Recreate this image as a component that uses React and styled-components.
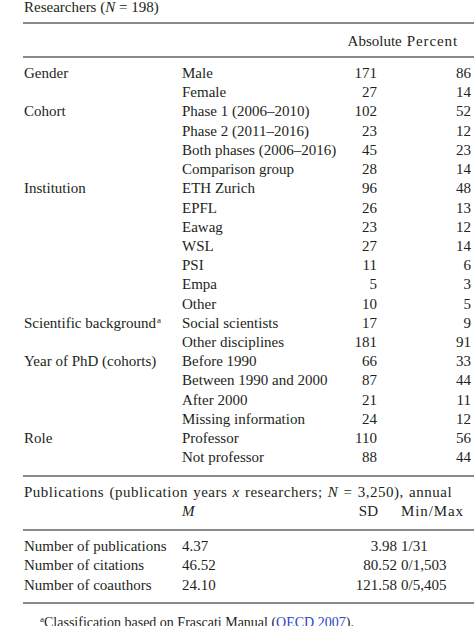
import React from "react";
import styled, { createGlobalStyle } from "styled-components";

const GlobalStyle = createGlobalStyle`
  html, body {
    margin: 0;
    padding: 0;
    background: #ffffff;
    overflow: hidden;
  }
  body {
    font-family: "Liberation Serif", "Times New Roman", serif;
    color: #231f20;
  }
`;

const groups = [
  {
    label: "Gender",
    items: [
      ["Male", 171, 86],
      ["Female", 27, 14],
    ],
  },
  {
    label: "Cohort",
    items: [
      ["Phase 1 (2006–2010)", 102, 52],
      ["Phase 2 (2011–2016)", 23, 12],
      ["Both phases (2006–2016)", 45, 23],
      ["Comparison group", 28, 14],
    ],
  },
  {
    label: "Institution",
    items: [
      ["ETH Zurich", 96, 48],
      ["EPFL", 26, 13],
      ["Eawag", 23, 12],
      ["WSL", 27, 14],
      ["PSI", 11, 6],
      ["Empa", 5, 3],
      ["Other", 10, 5],
    ],
  },
  {
    label: "Scientific background",
    note: "a",
    items: [
      ["Social scientists", 17, 9],
      ["Other disciplines", 181, 91],
    ],
  },
  {
    label: "Year of PhD (cohorts)",
    items: [
      ["Before 1990", 66, 33],
      ["Between 1990 and 2000", 87, 44],
      ["After 2000", 21, 11],
      ["Missing information", 24, 12],
    ],
  },
  {
    label: "Role",
    items: [
      ["Professor", 110, 56],
      ["Not professor", 88, 44],
    ],
  },
];

const publications = [
  ["Number of publications", "4.37", "3.98", "1/31"],
  ["Number of citations", "46.52", "80.52", "0/1,503"],
  ["Number of coauthors", "24.10", "121.58", "0/5,405"],
];

function App() {
  return (
    <>
      <GlobalStyle />
      <Table>
        <Caption>
          Researchers (<i>N</i> = 198)
        </Caption>
        <Rule $top="7.4px" />
        <HeaderRow>
          <span>Absolute</span>
          <Wide>Percent</Wide>
        </HeaderRow>
        <Rule />
        <Body>
          {groups.map(({ label, note, items }) =>
            items.map(([name, abs, pct], i) => (
              <React.Fragment key={label + name}>
                <Cell>
                  {i === 0 ? label : ""}
                  {i === 0 && note ? <Sup>{note}</Sup> : null}
                </Cell>
                <Cell>{name}</Cell>
                <Num>{abs}</Num>
                <Num>{pct}</Num>
              </React.Fragment>
            ))
          )}
        </Body>
        <Rule />
        <PubHead>
          <Title>
            Publications (publication years <i>x</i> researchers; <i>N</i> =
            3,250), annual
          </Title>
          <Cell />
          <Cell>
            <i>M</i>
          </Cell>
          <Num $pad="19px">SD</Num>
          <Cell $pad="4px">
            <Wide>Min/Max</Wide>
          </Cell>
        </PubHead>
        <Rule />
        <PubBody>
          {publications.map(([name, m, sd, range]) => (
            <React.Fragment key={name}>
              <Cell>{name}</Cell>
              <Cell>{m}</Cell>
              <Num>{sd}</Num>
              <Cell $pad="4px">{range}</Cell>
            </React.Fragment>
          ))}
        </PubBody>
        <Rule />
        <Footnote>
          <Sup>a</Sup>Classification based on Frascati Manual (
          <Link href="#!">OECD 2007</Link>).
        </Footnote>
      </Table>
    </>
  );
}

const Table = styled.div`
  margin: 0 0 0 23px;
  width: 460px;
  font-size: 15px;
  line-height: 19.2px;
`;

const Caption = styled.div`
  padding-left: 1px;
  line-height: 14.6px;
`;

const Rule = styled.div`
  height: 2px;
  margin-top: ${(p) => p.$top || "0"};
  background: #8a8a8a;
`;

const HeaderRow = styled.div`
  display: flex;
  justify-content: flex-end;
  gap: 5px;
  width: 435px;
  padding: 7.6px 13px 5px 0;
`;

const Wide = styled.span`
  letter-spacing: 0.9px;
`;

const Body = styled.div`
  display: grid;
  grid-template-columns: 158px 130px 66px 94px;
  padding: 6.3px 0 7.5px;
`;

const Cell = styled.div`
  padding-left: ${(p) => p.$pad || "1px"};
  white-space: nowrap;
`;

const Num = styled.div`
  text-align: right;
  padding-right: ${(p) => p.$pad || "0"};
  white-space: nowrap;
`;

const Sup = styled.sup`
  font-size: 9px;
  line-height: 0;
  vertical-align: 5px;
  margin-left: 1px;
`;

const PubHead = styled.div`
  display: grid;
  grid-template-columns: 158px 120px 96px 1fr;
  padding: 6px 0 7.6px;
`;

const Title = styled.div`
  grid-column: 1 / -1;
  padding-left: 1px;
  white-space: nowrap;
  letter-spacing: 0.5px;
  word-spacing: 1px;
`;

const PubBody = styled.div`
  display: grid;
  grid-template-columns: 158px 120px 96px 1fr;
  padding: 6.3px 0 7px;
`;

const Footnote = styled.div`
  padding: 9px 0 0 16px;
  font-size: 14px;
  line-height: 19px;
  white-space: nowrap;
`;

const Link = styled.a`
  color: #2a46c8;
  text-decoration: none;
`;

export default App;
